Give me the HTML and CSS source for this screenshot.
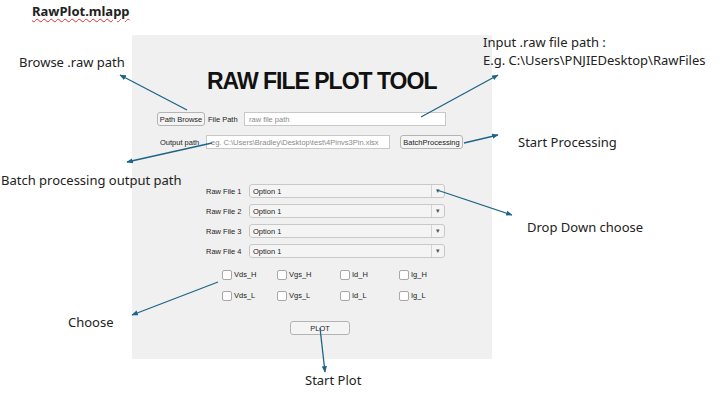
FILE: index.html
```html
<!DOCTYPE html>
<html lang="en">
<head>
  <meta charset="UTF-8" />
  <title>RawPlot.mlapp</title>
  <link rel="stylesheet" href="styles.css">
</head>
<body>
  <div class="page">
    <h1 class="file-name"><span class="spell">RawPlot.mlapp</span></h1>

    <div class="app">
      <h2 class="app-title">RAW FILE PLOT TOOL</h2>

      <div class="row row-path">
        <button class="btn btn-browse">Path Browse</button>
        <label class="lbl lbl-file">File Path</label>
        <input class="field field-path" type="text" placeholder="raw file path">
      </div>

      <div class="row row-output">
        <label class="lbl lbl-output">Output path</label>
        <input class="field field-output" type="text" placeholder="eg. C:\Users\Bradley\Desktop\test\4Pinvs3Pin.xlsx">
        <button class="btn btn-batch">BatchProcessing</button>
      </div>

      <div class="drops">
        <div class="row drop-row">
          <label class="lbl lbl-raw">Raw File 1</label>
          <div class="drop"><span class="drop-text">Option 1</span><span class="drop-arrow">&#9662;</span></div>
        </div>
        <div class="row drop-row">
          <label class="lbl lbl-raw">Raw File 2</label>
          <div class="drop"><span class="drop-text">Option 1</span><span class="drop-arrow">&#9662;</span></div>
        </div>
        <div class="row drop-row">
          <label class="lbl lbl-raw">Raw File 3</label>
          <div class="drop"><span class="drop-text">Option 1</span><span class="drop-arrow">&#9662;</span></div>
        </div>
        <div class="row drop-row">
          <label class="lbl lbl-raw">Raw File 4</label>
          <div class="drop"><span class="drop-text">Option 1</span><span class="drop-arrow">&#9662;</span></div>
        </div>
      </div>

      <div class="checks">
        <label class="chk"><span class="box"></span>Vds_H</label>
        <label class="chk"><span class="box"></span>Vgs_H</label>
        <label class="chk"><span class="box"></span>Id_H</label>
        <label class="chk"><span class="box"></span>Ig_H</label>
        <label class="chk"><span class="box"></span>Vds_L</label>
        <label class="chk"><span class="box"></span>Vgs_L</label>
        <label class="chk"><span class="box"></span>Id_L</label>
        <label class="chk"><span class="box"></span>Ig_L</label>
      </div>

      <div class="plot-wrap">
        <button class="btn btn-plot">PLOT</button>
      </div>
    </div>

    <!-- callout notes -->
    <div class="note note-browse">Browse .raw path</div>
    <div class="note note-input">Input .raw file path :<br>E.g. C:\Users\PNJIEDesktop\RawFiles</div>
    <div class="note note-start">Start Processing</div>
    <div class="note note-batch">Batch processing output path</div>
    <div class="note note-drop">Drop Down choose</div>
    <div class="note note-choose">Choose</div>
    <div class="note note-plot">Start Plot</div>

    <svg class="arrows" width="720" height="394" viewBox="0 0 720 394">
      <defs>
        <marker id="head" viewBox="0 0 10 10" refX="9" refY="5" markerWidth="5" markerHeight="5" orient="auto">
          <path d="M0 1 L10 5 L0 9 Z" fill="#1d6487"/>
        </marker>
      </defs>
      <g stroke="#1d6487" stroke-width="1.3" fill="none" marker-end="url(#head)">
        <line x1="187" y1="110" x2="120" y2="75"/>
        <line x1="421" y1="117" x2="498" y2="75"/>
        <line x1="464" y1="143" x2="498" y2="135"/>
        <line x1="212" y1="143" x2="127" y2="162"/>
        <line x1="437" y1="190" x2="512" y2="215"/>
        <line x1="218" y1="282" x2="132" y2="315"/>
        <line x1="320" y1="328" x2="325" y2="372"/>
      </g>
    </svg>
  </div>
</body>
</html>
```

FILE: styles.css
```css
body {
  margin: 0;
  background: #fff;
  font-family: "Liberation Sans", Arial, sans-serif;
}

.page {
  position: relative;
  width: 720px;
  height: 394px;
  overflow: hidden;
}

.file-name {
  margin: 0;
  padding: 2px 0 0 32px;
  height: 35px;
  box-sizing: border-box;
  font-family: "Noto Sans", sans-serif;
  font-size: 13px;
  font-weight: bold;
  color: #222;
  line-height: 18px;
}

.spell {
  text-decoration: underline wavy #e03030;
  text-decoration-thickness: 1px;
  text-underline-offset: 2px;
}

.app {
  margin-left: 132px;
  width: 360px;
  height: 324px;
  background: #f0f0f0;
  font-size: 7.5px;
  color: #222;
  box-sizing: border-box;
  padding-top: 33px;
}

.app-title {
  margin: 0 0 18px 75px;
  font-size: 23px;
  letter-spacing: -1px;
  font-weight: bold;
  color: #111;
  line-height: 26px;
}

.row {
  display: flex;
  align-items: center;
  height: 14px;
}

.btn {
  font-family: inherit;
  font-size: 7.5px;
  color: #222;
  background: #f4f4f4;
  border: 1px solid #b4b4b4;
  border-radius: 3px;
  height: 14px;
  padding: 0;
  box-sizing: border-box;
}

.field {
  font-family: inherit;
  font-size: 7.5px;
  height: 14px;
  box-sizing: border-box;
  border: 1px solid #c8c8c8;
  background: #fff;
  padding: 0 4px;
}

.field::placeholder {
  color: #8a8a8a;
}

.lbl {
  white-space: nowrap;
}

.row-path .btn-browse {
  margin-left: 25px;
  width: 48px;
}

.lbl-file {
  margin-left: 3px;
  width: 36px;
}

.field-path {
  width: 202px;
}

.row-output {
  margin-top: 9px;
}

.lbl-output {
  margin-left: 28px;
  width: 46px;
}

.field-output {
  width: 184px;
}

.btn-batch {
  margin-left: 10px;
  width: 63px;
}

.drops {
  margin-top: 35px;
  display: flex;
  flex-direction: column;
  gap: 6px;
}

.lbl-raw {
  margin-left: 74px;
  width: 43px;
}

.drop {
  width: 196px;
  height: 14px;
  box-sizing: border-box;
  border: 1px solid #c8c8c8;
  border-radius: 3px;
  background: #f4f4f4;
  display: flex;
  align-items: center;
}

.drop-text {
  flex: 1;
  padding-left: 3px;
}

.drop-arrow {
  width: 12px;
  height: 100%;
  border-left: 1px solid #d4d4d4;
  text-align: center;
  font-size: 7px;
  line-height: 12px;
  color: #555;
}

.checks {
  margin: 11px 0 0 90px;
  display: grid;
  grid-template-columns: 55px 63px 59px 50px;
  row-gap: 10px;
}

.chk {
  display: flex;
  align-items: center;
  gap: 2px;
  height: 11px;
}

.box {
  width: 8px;
  height: 8px;
  border: 1px solid #a8a8a8;
  border-radius: 2px;
  background: #fff;
}

.plot-wrap {
  margin-top: 20px;
  padding-left: 158px;
}

.btn-plot {
  width: 60px;
}

.note {
  position: absolute;
  font-family: "Noto Sans", sans-serif;
  font-size: 13px;
  line-height: 18px;
  color: #222;
  white-space: nowrap;
}

.note-browse { left: 19px; top: 53px; }
.note-input { left: 483px; top: 33px; }
.note-start { left: 518px; top: 133px; }
.note-batch { left: 1px; top: 171px; }
.note-drop { left: 527px; top: 218px; }
.note-choose { left: 68px; top: 313px; }
.note-plot { left: 305px; top: 371px; }

.arrows {
  position: absolute;
  left: 0;
  top: 0;
}
```
